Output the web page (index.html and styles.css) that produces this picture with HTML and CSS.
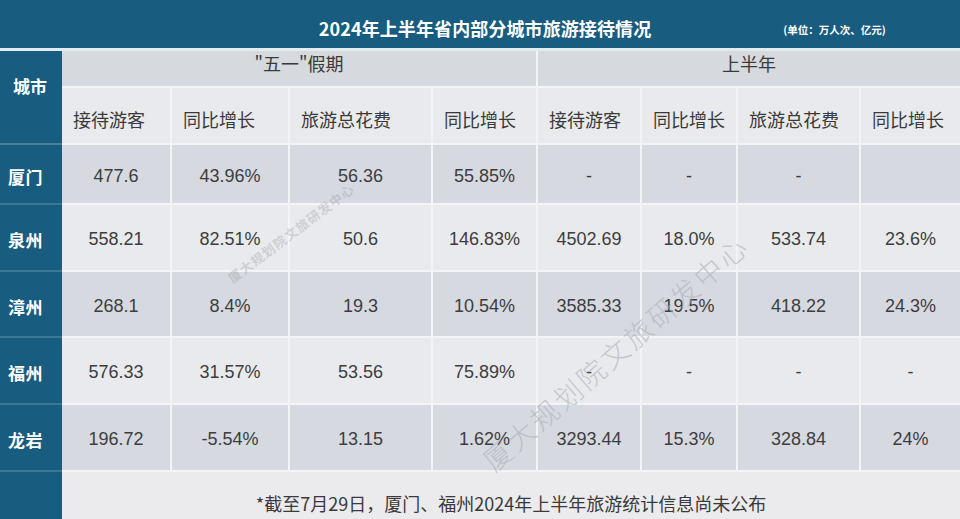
FILE: index.html
```html
<!DOCTYPE html>
<html lang="zh-CN">
<head>
<meta charset="utf-8">
<title>2024年上半年省内部分城市旅游接待情况</title>
<link rel="stylesheet" href="styles.css">
</head>
<body>
<div class="sheet">
  <header class="title-bar">
    <div class="spacer"></div>
    <h1 class="title">2024年上半年省内部分城市旅游接待情况</h1>
    <div class="unit-wrap"><span class="unit">(单位：万人次、亿元)</span></div>
  </header>
  <div class="table">
    <div class="cell city-head">城市</div>
    <div class="cell group group-a">"五一"假期</div>
    <div class="cell group group-b">上半年</div>

    <div class="cell label">接待游客</div>
    <div class="cell label">同比增长</div>
    <div class="cell label">旅游总花费</div>
    <div class="cell label">同比增长</div>
    <div class="cell label">接待游客</div>
    <div class="cell label">同比增长</div>
    <div class="cell label">旅游总花费</div>
    <div class="cell label last">同比增长</div>

    <div class="row dark">
      <div class="cell city">厦门</div>
      <div class="cell val">477.6</div>
      <div class="cell val">43.96%</div>
      <div class="cell val">56.36</div>
      <div class="cell val">55.85%</div>
      <div class="cell val">-</div>
      <div class="cell val">-</div>
      <div class="cell val">-</div>
      <div class="cell val last"></div>
    </div>
    <div class="row light">
      <div class="cell city">泉州</div>
      <div class="cell val">558.21</div>
      <div class="cell val">82.51%</div>
      <div class="cell val">50.6</div>
      <div class="cell val">146.83%</div>
      <div class="cell val">4502.69</div>
      <div class="cell val">18.0%</div>
      <div class="cell val">533.74</div>
      <div class="cell val last">23.6%</div>
    </div>
    <div class="row dark">
      <div class="cell city">漳州</div>
      <div class="cell val">268.1</div>
      <div class="cell val">8.4%</div>
      <div class="cell val">19.3</div>
      <div class="cell val">10.54%</div>
      <div class="cell val">3585.33</div>
      <div class="cell val">19.5%</div>
      <div class="cell val">418.22</div>
      <div class="cell val last">24.3%</div>
    </div>
    <div class="row light">
      <div class="cell city">福州</div>
      <div class="cell val">576.33</div>
      <div class="cell val">31.57%</div>
      <div class="cell val">53.56</div>
      <div class="cell val">75.89%</div>
      <div class="cell val">-</div>
      <div class="cell val">-</div>
      <div class="cell val">-</div>
      <div class="cell val last">-</div>
    </div>
    <div class="row dark">
      <div class="cell city">龙岩</div>
      <div class="cell val">196.72</div>
      <div class="cell val">-5.54%</div>
      <div class="cell val">13.15</div>
      <div class="cell val">1.62%</div>
      <div class="cell val">3293.44</div>
      <div class="cell val">15.3%</div>
      <div class="cell val">328.84</div>
      <div class="cell val last">24%</div>
    </div>

    <div class="cell city foot-city"></div>
    <div class="cell footnote">*截至7月29日，厦门、福州2024年上半年旅游统计信息尚未公布</div>
  </div>
  <div class="wm wm-small">厦大规划院文旅研发中心</div>
  <div class="wm wm-big">厦大规划院文旅研发中心</div>
</div>
</body>
</html>
```

FILE: styles.css
```css
* { box-sizing: border-box; }

html, body {
  margin: 0;
  padding: 0;
  background: #ebebee;
}

body {
  font-family: "Liberation Sans", "Noto Sans CJK SC", sans-serif;
  color: #3b3b3b;
}

.sheet {
  position: relative;
  width: 960px;
  height: 519px;
  overflow: hidden;
}

.title-bar {
  height: 51px;
  background: #185c80;
  border-bottom: 3px solid #e2ebf0;
  display: grid;
  grid-template-columns: 1fr auto 1fr;
  align-items: center;
  padding: 7px 0 0 10px;
}

.title {
  margin: 0;
  font-family: "Noto Sans CJK SC", sans-serif;
  font-size: 18px;
  font-weight: 700;
  color: #ffffff;
  letter-spacing: 0.1px;
  line-height: 1;
}

.unit-wrap {
  padding-left: 132px;
  padding-top: 2px;
}

.unit {
  font-family: "Noto Sans CJK SC", sans-serif;
  font-size: 10.5px;
  font-weight: 700;
  color: #ffffff;
  white-space: nowrap;
}

.table {
  display: grid;
  grid-template-columns: 62px 110px 118px 143px 105px 104px 96px 123px 99px;
  grid-template-rows: 37px 57px 60px 67px 66px 67px 67px 47px;
}

.row { display: contents; }

.cell {
  display: flex;
  align-items: center;
  justify-content: center;
  border-right: 2px solid #f3f4f6;
  border-bottom: 2px solid #f3f4f6;
  white-space: nowrap;
}

.cell.last { border-right: none; }

.city-head,
.city {
  background: #185c80;
  color: #ffffff;
  font-family: "Noto Sans CJK SC", sans-serif;
  font-weight: 700;
  font-size: 17px;
  border-right: none;
  border-bottom: 2px solid #3d7696;
  justify-content: flex-start;
}

.city-head {
  grid-row: span 2;
  padding: 0 0 24px 13px;
  border-bottom-color: #4a7f9c;
}

.city {
  padding: 4px 0 0 8px;
  letter-spacing: 0.5px;
}

.group {
  background: #d6d9de;
  font-family: "Noto Sans CJK SC", sans-serif;
  font-size: 18px;
  color: #3a3a3a;
  padding-bottom: 11px;
}

.group-a { grid-column: span 4; }
.group-b { grid-column: span 4; border-right: none; }

.label {
  background: #e9eaed;
  font-family: "Noto Sans CJK SC", sans-serif;
  font-size: 18px;
  color: #3a3a3a;
  justify-content: flex-start;
  padding: 7px 0 0 11px;
}

.val {
  font-size: 18px;
  color: #3d3d3d;
  padding-top: 4px;
}

.row.dark > .val { background: #d6d9df; }
.row.light > .val { background: #e9eaed; }

.foot-city {
  border-bottom: none;
}

.footnote {
  grid-column: span 8;
  background: #ebebee;
  border: none;
  font-family: "Noto Sans CJK SC", sans-serif;
  font-size: 18px;
  color: #3a3a3a;
  padding-top: 14px;
}

.wm {
  position: absolute;
  white-space: nowrap;
  font-family: "Noto Sans CJK SC", sans-serif;
  pointer-events: none;
  transform: translate(-50%, -50%);
}

.wm-big {
  left: 615px;
  top: 352px;
  font-size: 28px;
  font-weight: 300;
  letter-spacing: 3px;
  color: rgba(170, 175, 184, 0.6);
  transform: translate(-50%, -50%) rotate(-41deg);
}

.wm-small {
  left: 291px;
  top: 233px;
  font-size: 13px;
  font-weight: 700;
  letter-spacing: 1px;
  color: rgba(150, 155, 165, 0.35);
  transform: translate(-50%, -50%) rotate(-37deg);
}
```
